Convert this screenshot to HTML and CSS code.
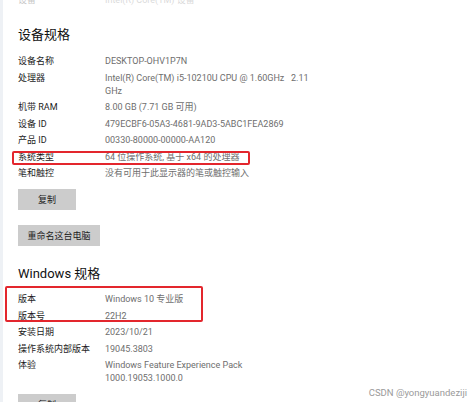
FILE: index.html
```html
<!DOCTYPE html>
<html lang="zh-CN">
<head>
<meta charset="utf-8">
<title>关于</title>
<link rel="stylesheet" href="styles.css">
</head>
<body>
<main class="page">
  <div class="row faded">
    <span class="label">设备</span>
    <span class="value">Intel(R) Core(TM) 设备</span>
  </div>

  <h2 class="heading first">设备规格</h2>
  <div class="list">
    <div class="row"><span class="label">设备名称</span><span class="value">DESKTOP-OHV1P7N</span></div>
    <div class="row"><span class="label">处理器</span><span class="value">Intel(R) Core(TM) i5-10210U CPU @ 1.60GHz&nbsp;&nbsp; 2.11 GHz</span></div>
    <div class="row"><span class="label">机带 RAM</span><span class="value">8.00 GB (7.71 GB 可用)</span></div>
    <div class="row"><span class="label">设备 ID</span><span class="value">479ECBF6-05A3-4681-9AD3-5ABC1FEA2869</span></div>
    <div class="row"><span class="label">产品 ID</span><span class="value">00330-80000-00000-AA120</span></div>
    <div class="row marked">
      <span class="label">系统类型</span><span class="value">64 位操作系统, 基于 x64 的处理器</span>
      <span class="mark mark-one"></span>
    </div>
    <div class="row"><span class="label">笔和触控</span><span class="value">没有可用于此显示器的笔或触控输入</span></div>
  </div>
  <button class="btn btn-copy">复制</button>
  <button class="btn btn-rename">重命名这台电脑</button>

  <h2 class="heading second">Windows 规格</h2>
  <div class="list">
    <div class="group marked">
      <div class="row"><span class="label">版本</span><span class="value">Windows 10 专业版</span></div>
      <div class="row"><span class="label">版本号</span><span class="value">22H2</span></div>
      <span class="mark mark-two"></span>
    </div>
    <div class="row"><span class="label">安装日期</span><span class="value">2023/10/21</span></div>
    <div class="row"><span class="label">操作系统内部版本</span><span class="value">19045.3803</span></div>
    <div class="row"><span class="label">体验</span><span class="value">Windows Feature Experience Pack 1000.19053.1000.0</span></div>
  </div>
  <button class="btn btn-copy">复制</button>
</main>
<div class="watermark">CSDN @yongyuandeziji</div>
</body>
</html>
```
FILE: styles.css
```css
html, body {
  margin: 0;
  padding: 0;
  background: #ffffff;
}
body {
  width: 474px;
  height: 402px;
  overflow: hidden;
  position: relative;
  border-left: 3px solid #eef1f5;
  box-sizing: border-box;
  font-family: "Roboto", "Noto Sans CJK SC", sans-serif;
  font-size: 9px;
  color: #1c1c1c;
}
.page {
  padding-left: 15px;
  display: flex;
  flex-direction: column;
  align-items: flex-start;
}
.row {
  display: flex;
  line-height: 13px;
  position: relative;
}
.faded {
  margin-top: -6.5px;
  opacity: 0.25;
}
.label {
  width: 87px;
  flex: none;
  font-size: 9px;
}
.value {
  width: 206px;
  font-size: 9px;
  color: #6e6e6e;
}
.heading {
  margin: 19px 0 11.5px;
  font-family: "Roboto", "Noto Sans CJK SC", sans-serif;
  font-weight: 400;
  font-size: 13px;
  line-height: 18px;
  color: #111111;
}
.heading.second {
  margin: 19px 0 10.5px;
}
.list {
  display: flex;
  flex-direction: column;
  gap: 3.5px;
}
.group {
  display: flex;
  flex-direction: column;
  gap: 3.5px;
  position: relative;
}
.btn {
  margin-top: 8.5px;
  height: 21px;
  border: none;
  background: #cccccc;
  font-family: "Noto Sans CJK SC", sans-serif;
  font-size: 9px;
  color: #1c1c1c;
  padding: 0;
}
.btn-copy { width: 58px; }
.btn-rename { width: 82px; margin-top: 15px; }
.mark {
  position: absolute;
  border: 2px solid #e3262d;
  border-radius: 2px;
  box-sizing: border-box;
  pointer-events: none;
}
.mark-one {
  left: -6px;
  top: 0;
  width: 238px;
  height: 14.5px;
}
.mark-two {
  left: -13px;
  top: -7px;
  width: 198px;
  height: 35.5px;
}
.watermark {
  position: absolute;
  right: 7px;
  top: 387px;
  font-family: "Roboto", sans-serif;
  font-size: 9.5px;
  color: #9a9a9a;
}
```
